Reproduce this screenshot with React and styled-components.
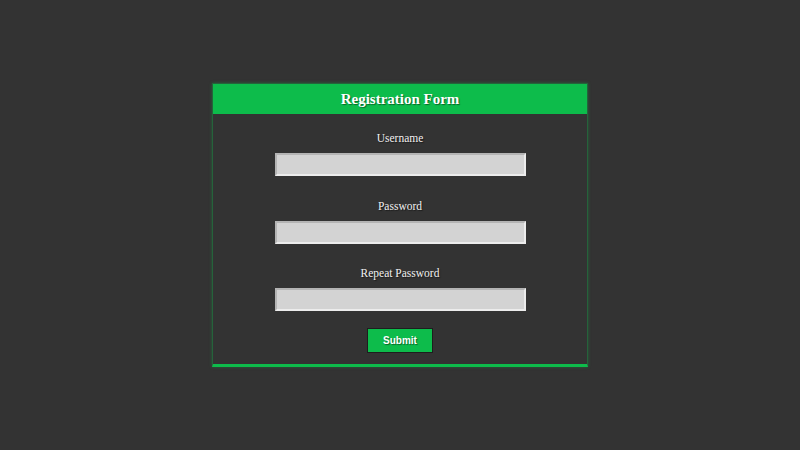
import styled, { createGlobalStyle } from 'styled-components';

const GlobalStyle = createGlobalStyle`
  html, body {
    margin: 0;
    padding: 0;
    background: #333333;
  }
`;

const Page = styled.div`
  min-height: 100vh;
  display: flex;
  align-items: center;
  justify-content: center;
  font-family: 'Liberation Serif', 'Times New Roman', serif;
`;

const Card = styled.form`
  width: 376px;
  box-sizing: border-box;
  background: #333333;
  border: 1px solid rgba(13, 188, 75, 0.35);
  border-bottom: 3px solid #0dbc4b;
  box-shadow: 0 0 3px rgba(13, 188, 75, 0.35);
  display: flex;
  flex-direction: column;
`;

const Header = styled.h1`
  margin: 0;
  height: 30px;
  line-height: 30px;
  background: #0dbc4b;
  color: #ffffff;
  text-align: center;
  font-size: 15px;
  font-weight: bold;
  text-shadow: 1px 1px 1px rgba(0, 0, 0, 0.45);
`;

const Body = styled.div`
  display: flex;
  flex-direction: column;
  align-items: center;
  padding: 17px 0 11px;
`;

const Field = styled.div`
  display: flex;
  flex-direction: column;
  align-items: center;
  margin-bottom: ${p => (p.$last ? '17px' : '22.5px')};
`;

const Label = styled.label`
  color: #f0f0f0;
  font-size: 11.5px;
  line-height: 14px;
  margin-bottom: 8px;
  text-shadow: 1px 1px 1px rgba(0, 0, 0, 0.5);
`;

const Input = styled.input`
  width: 251px;
  height: 23px;
  box-sizing: border-box;
  background: #d3d3d3;
  border: 2px solid;
  border-color: #b4b4b4 #ececec #ececec #b4b4b4;
  outline: none;
`;

const SubmitButton = styled.button`
  width: 66px;
  height: 25px;
  background: #0dbc4b;
  border: 1px solid #1e1e1e;
  color: #ffffff;
  font-family: 'Liberation Sans', Arial, sans-serif;
  font-size: 10px;
  font-weight: bold;
  text-shadow: 1px 1px 1px rgba(0, 0, 0, 0.45);
  cursor: pointer;
`;

const fields = [
  { id: 'username', label: 'Username', type: 'text' },
  { id: 'password', label: 'Password', type: 'password' },
  { id: 'repeat', label: 'Repeat Password', type: 'password' },
];

export default function App() {
  return (
    <>
      <GlobalStyle />
      <Page>
        <Card onSubmit={e => e.preventDefault()}>
          <Header>Registration Form</Header>
          <Body>
            {fields.map((f, i) => (
              <Field key={f.id} $last={i === fields.length - 1}>
                <Label htmlFor={f.id}>{f.label}</Label>
                <Input id={f.id} type={f.type} />
              </Field>
            ))}
            <SubmitButton type="submit">Submit</SubmitButton>
          </Body>
        </Card>
      </Page>
    </>
  );
}
